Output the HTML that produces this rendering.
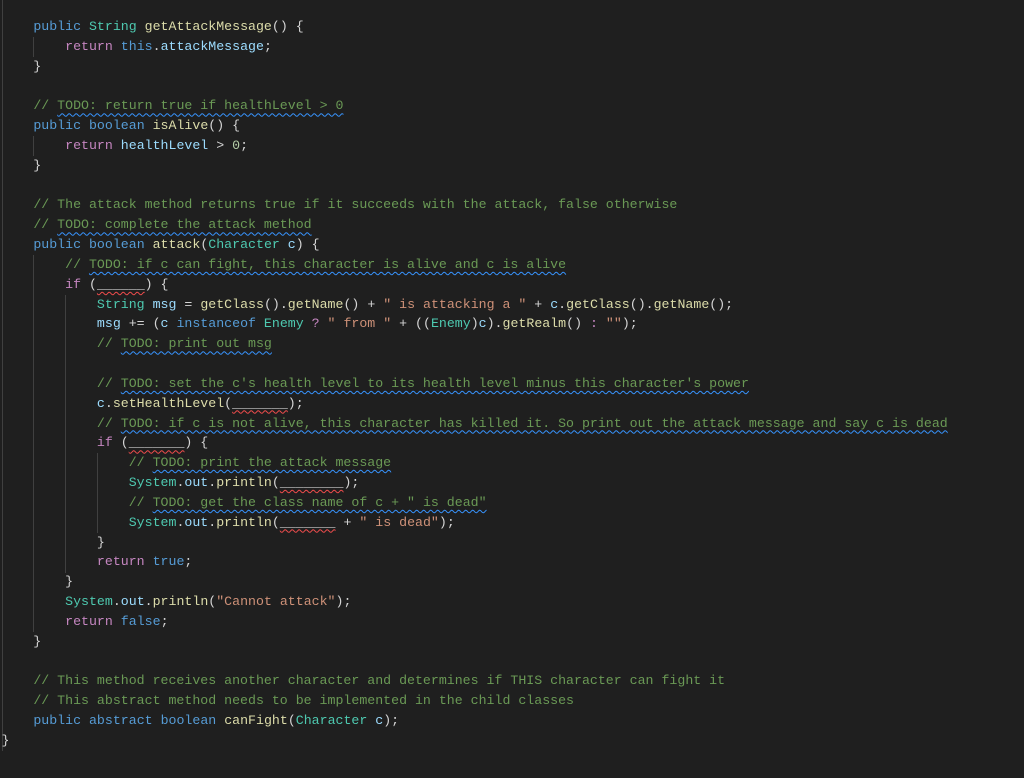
<!DOCTYPE html>
<html><head><meta charset="utf-8"><style>
html,body{margin:0;padding:0;background:#1f1f1f;width:1024px;height:778px;overflow:hidden}
#code{position:absolute;left:1.5px;top:17px;font-family:"Liberation Mono",monospace;font-size:13.25px;line-height:19.83px;color:#d4d4d4;white-space:pre}
.k{color:#569cd6}.c{color:#c586c0}.t{color:#4ec9b0}.f{color:#dcdcaa}.v{color:#9cdcfe}.s{color:#ce9178}.n{color:#b5cea8}.m{color:#6a9955}
.w{text-decoration:underline wavy #3794ff;text-underline-offset:3px;text-decoration-thickness:1px}
.e{text-decoration:underline wavy #f14c4c;text-underline-offset:3px;text-decoration-thickness:1px}
.g{position:absolute;width:1px;background:#404040}
</style></head><body>
<div class="g" style="left:2px;top:0;height:751px"></div>
<div class="g" style="left:33px;top:37px;height:20px"></div>
<div class="g" style="left:33px;top:136px;height:20px"></div>
<div class="g" style="left:33px;top:255px;height:377px"></div>
<div class="g" style="left:65px;top:295px;height:278px"></div>
<div class="g" style="left:97px;top:453px;height:80px"></div>
<div id="code">    <span class="k">public</span> <span class="t">String</span> <span class="f">getAttackMessage</span>() {
        <span class="c">return</span> <span class="k">this</span>.<span class="v">attackMessage</span>;
    }

    <span class="m">// <span class="w">TODO: return true if healthLevel &gt; 0</span></span>
    <span class="k">public</span> <span class="k">boolean</span> <span class="f">isAlive</span>() {
        <span class="c">return</span> <span class="v">healthLevel</span> &gt; <span class="n">0</span>;
    }

    <span class="m">// The attack method returns true if it succeeds with the attack, false otherwise</span>
    <span class="m">// <span class="w">TODO: complete the attack method</span></span>
    <span class="k">public</span> <span class="k">boolean</span> <span class="f">attack</span>(<span class="t">Character</span> <span class="v">c</span>) {
        <span class="m">// <span class="w">TODO: if c can fight, this character is alive and c is alive</span></span>
        <span class="c">if</span> (<span class="e">______</span>) {
            <span class="t">String</span> <span class="v">msg</span> = <span class="f">getClass</span>().<span class="f">getName</span>() + <span class="s">" is attacking a "</span> + <span class="v">c</span>.<span class="f">getClass</span>().<span class="f">getName</span>();
            <span class="v">msg</span> += (<span class="v">c</span> <span class="k">instanceof</span> <span class="t">Enemy</span> <span class="c">?</span> <span class="s">" from "</span> + ((<span class="t">Enemy</span>)<span class="v">c</span>).<span class="f">getRealm</span>() <span class="c">:</span> <span class="s">""</span>);
            <span class="m">// <span class="w">TODO: print out msg</span></span>

            <span class="m">// <span class="w">TODO: set the c's health level to its health level minus this character's power</span></span>
            <span class="v">c</span>.<span class="f">setHealthLevel</span>(<span class="e">_______</span>);
            <span class="m">// <span class="w">TODO: if c is not alive, this character has killed it. So print out the attack message and say c is dead</span></span>
            <span class="c">if</span> (<span class="e">_______</span>) {
                <span class="m">// <span class="w">TODO: print the attack message</span></span>
                <span class="t">System</span>.<span class="v">out</span>.<span class="f">println</span>(<span class="e">________</span>);
                <span class="m">// <span class="w">TODO: get the class name of c + " is dead"</span></span>
                <span class="t">System</span>.<span class="v">out</span>.<span class="f">println</span>(<span class="e">_______</span> + <span class="s">" is dead"</span>);
            }
            <span class="c">return</span> <span class="k">true</span>;
        }
        <span class="t">System</span>.<span class="v">out</span>.<span class="f">println</span>(<span class="s">"Cannot attack"</span>);
        <span class="c">return</span> <span class="k">false</span>;
    }

    <span class="m">// This method receives another character and determines if THIS character can fight it</span>
    <span class="m">// This abstract method needs to be implemented in the child classes</span>
    <span class="k">public</span> <span class="k">abstract</span> <span class="k">boolean</span> <span class="f">canFight</span>(<span class="t">Character</span> <span class="v">c</span>);
}</div>
</body></html>
